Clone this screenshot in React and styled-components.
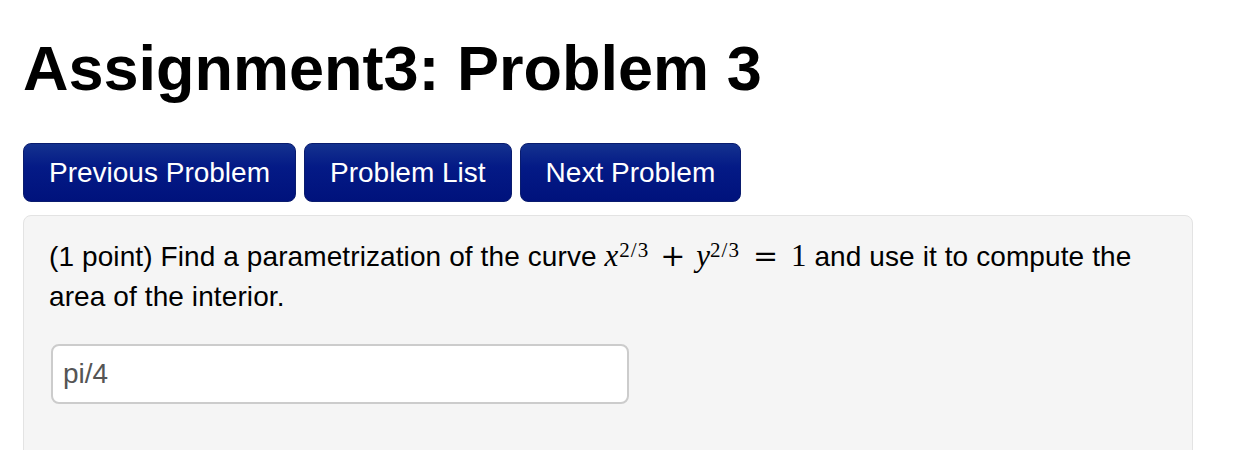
import React from 'react'
import styled, { createGlobalStyle } from 'styled-components'

const GlobalStyle = createGlobalStyle`
  html, body {
    margin: 0;
    padding: 0;
    background: #fff;
  }
  body {
    font-family: "Liberation Sans", Arial, sans-serif;
    color: #000;
  }
`

const Page = styled.div`
  padding: 34px 0 0 23px;
  width: 1170px;
`

const Title = styled.h1`
  margin: 0;
  font-size: 63px;
  line-height: 69px;
  font-weight: 700;
`

const NavBar = styled.div`
  display: flex;
  gap: 8px;
  margin-top: 40px;
`

const NavButton = styled.button`
  height: 59px;
  padding: 0 25px;
  border: 1px solid #0a1c6e;
  border-radius: 8px;
  background: linear-gradient(to bottom, #14328f 0%, #041a86 40%, #00127c 100%);
  color: #fff;
  font-family: "Liberation Sans", Arial, sans-serif;
  font-size: 28px;
  line-height: 40px;
  cursor: pointer;
`

const Panel = styled.div`
  margin-top: 13px;
  min-height: 260px;
  padding: 21px 25px;
  background: #f5f5f5;
  border: 1px solid #e3e3e3;
  border-radius: 8px;
`

const Statement = styled.p`
  margin: 0;
  font-size: 28px;
  line-height: 40px;
  letter-spacing: 0.1px;
  color: #000;
`

const Math = styled.span`
  font-family: "Liberation Serif", "Times New Roman", serif;
  font-size: 31px;
  line-height: 1;
  letter-spacing: 0;
`

const Var = styled.span`
  font-style: italic;
`

const Sup = styled.span`
  font-family: "Liberation Serif", "Times New Roman", serif;
  font-size: 21px;
  line-height: 1;
  letter-spacing: 1px;
  vertical-align: 9px;
  margin-left: ${p => p.$shift || 0}px;
`

const Op = styled.span`
  font-family: "DejaVu Serif", serif;
  font-size: 30px;
  margin: 0 ${p => p.$space}px;
`

const Answer = styled.input`
  display: block;
  box-sizing: border-box;
  width: 578px;
  height: 60px;
  margin: 27px 0 0 2px;
  padding: 0 10px;
  border: 2px solid #cccccc;
  border-radius: 8px;
  background: #fff;
  color: #555;
  font-family: "Liberation Sans", Arial, sans-serif;
  font-size: 28px;
  outline: none;
`

export default function App() {
  return (
    <>
      <GlobalStyle />
      <Page>
        <Title>Assignment3: Problem 3</Title>
        <NavBar>
          <NavButton>Previous Problem</NavButton>
          <NavButton>Problem List</NavButton>
          <NavButton>Next Problem</NavButton>
        </NavBar>
        <Panel>
          <Statement>
            (1 point) Find a parametrization of the curve{' '}
            <Math>
              <Var>x</Var>
              <Sup $shift={1}>2/3</Sup>
              <Op $space={11}>+</Op>
              <Var>y</Var>
              <Sup $shift={0}>2/3</Sup>
              <Op $space={13}>=</Op>
              1
            </Math>{' '}
            and use it to compute the area of the interior.
          </Statement>
          <Answer defaultValue="pi/4" />
        </Panel>
      </Page>
    </>
  )
}
